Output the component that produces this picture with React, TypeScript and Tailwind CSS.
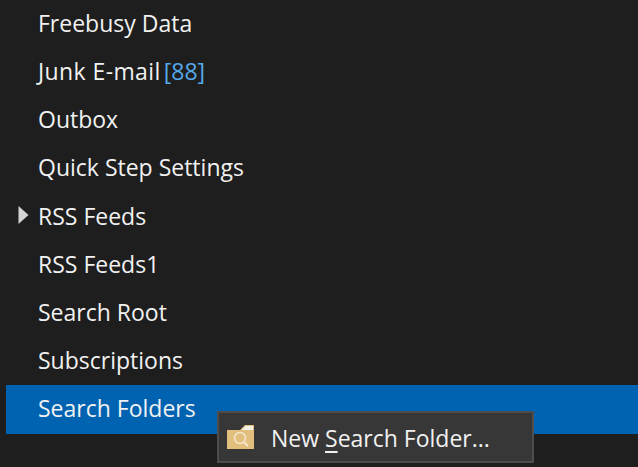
const rows = ["Freebusy Data", "Junk E-mail", "Outbox", "Quick Step Settings", "RSS Feeds", "RSS Feeds1", "Search Root", "Subscriptions", "Search Folders"];

export default function App() {
  return (
    <div className="relative h-[467px] w-[638px] overflow-hidden bg-[#1e1e1e] font-['Open_Sans',sans-serif] text-[23px] text-[#f1f1f1]">
      <ul className="flex flex-col pl-[6px]">
        {rows.map((name) => (
          <li key={name} className={`relative flex h-[48.18px] items-center pl-[32px] ${name === "Search Folders" ? "bg-[#0063b1]" : ""}`}>
            {name === "RSS Feeds" && (
              <svg className="absolute left-[12px] top-[12px]" width="11" height="20" viewBox="0 0 11 20">
                <path d="M0.5 1 L10.5 10 L0.5 19 Z" fill="#d4d4d4" />
              </svg>
            )}
            <span className={`-translate-y-[1px] ${name === "Junk E-mail" ? "tracking-[0.4px]" : ""}`}>{name}</span>
            {name === "Junk E-mail" && <span className="ml-[3px] -translate-y-[1px] text-[#55a9ea]">[88]</span>}
          </li>
        ))}
      </ul>
      <div className="absolute left-[217px] top-[411px] flex h-[52px] w-[317px] items-center border-2 border-[#4d4d4d] bg-[#373737] pl-[8px]">
        <svg width="27" height="24" viewBox="0 0 27 24">
          <path d="M0 5 H13 L18 0 H27 V24 H0 Z" fill="#e2bf7d" />
          <path d="M14.5 5 L18.5 1 H26 V5 Z" fill="#f3f0e8" />
          <circle cx="13" cy="13" r="5.5" fill="none" stroke="#f3e6c8" strokeWidth="1.5" />
          <path d="M17 17 L21 21" stroke="#f3e6c8" strokeWidth="2" />
        </svg>
        <span className="ml-[17px] translate-y-[1px] text-[#f1f1f1]">New <span className="underline underline-offset-4">S</span>earch Folder...</span>
      </div>
    </div>
  );
}
